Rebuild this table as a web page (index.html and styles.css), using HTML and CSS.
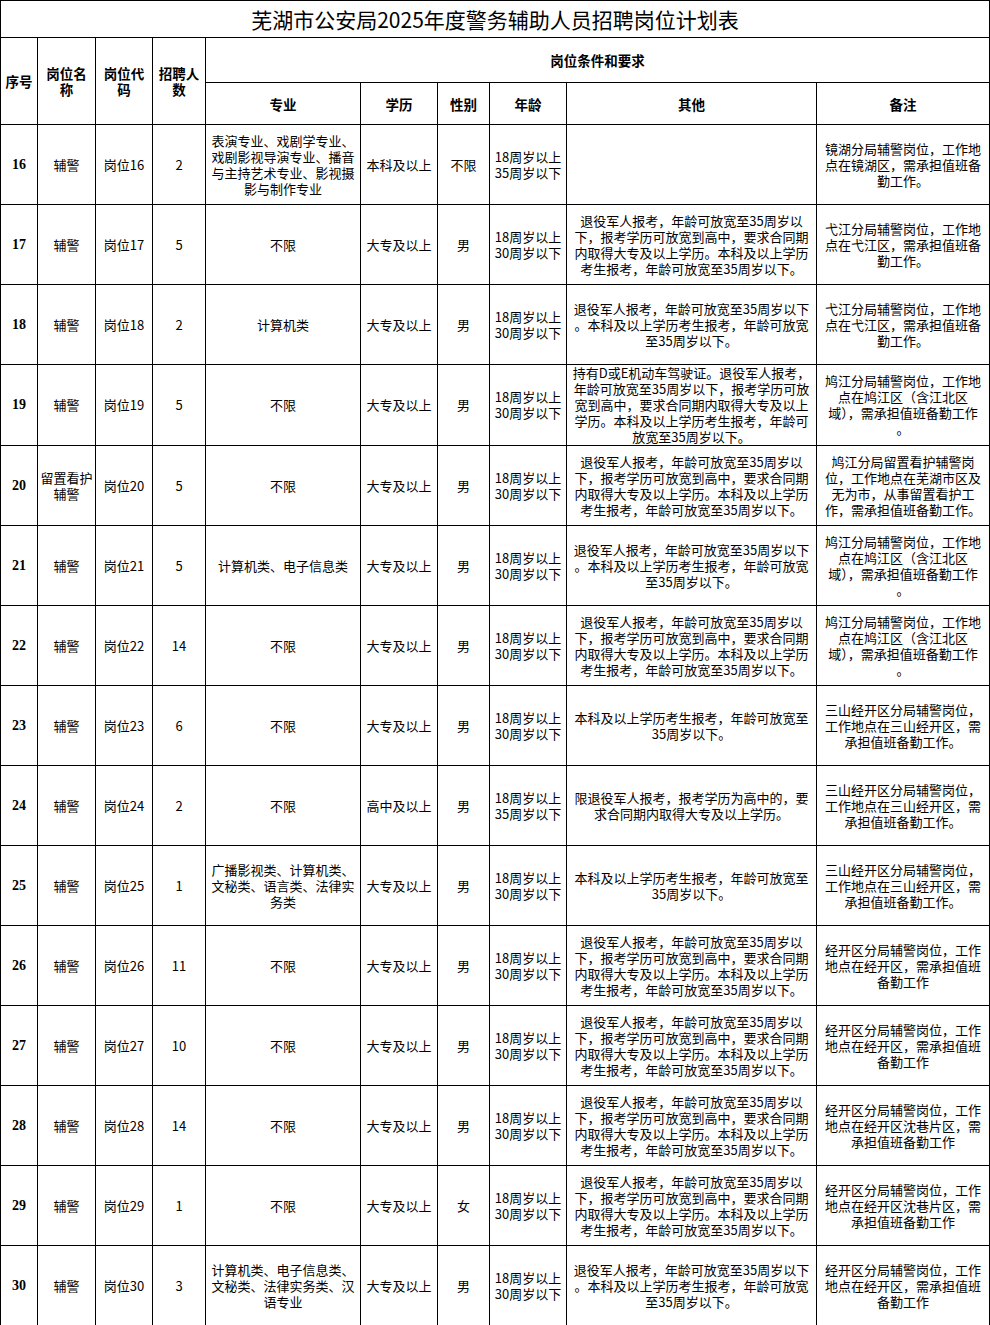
FILE: index.html
```html
<!DOCTYPE html>
<html lang="zh-CN">
<head>
<meta charset="utf-8">
<title>芜湖市公安局2025年度警务辅助人员招聘岗位计划表</title>
<link rel="stylesheet" href="styles.css">
</head>
<body>
<table class="sheet">
<colgroup>
<col class="c1"><col class="c2"><col class="c3"><col class="c4"><col class="c5"><col class="c6"><col class="c7"><col class="c8"><col class="c9"><col class="c10">
</colgroup>
<tr class="r-title"><td colspan="10" class="title">芜湖市公安局2025年度警务辅助人员招聘岗位计划表</td></tr>
<tr class="r-h1">
<td rowspan="2" class="hd">序号</td>
<td rowspan="2" class="hd">岗位名<br>称</td>
<td rowspan="2" class="hd">岗位代<br>码</td>
<td rowspan="2" class="hd">招聘人<br>数</td>
<td colspan="6" class="hd">岗位条件和要求</td>
</tr>
<tr class="r-h2">
<td class="hd">专业</td><td class="hd">学历</td><td class="hd">性别</td><td class="hd">年龄</td><td class="hd">其他</td><td class="hd">备注</td>
</tr>

<tr class="row">
<td class="num">16</td><td>辅警</td><td>岗位16</td><td>2</td>
<td>表演专业、戏剧学专业、<br>戏剧影视导演专业、播音<br>与主持艺术专业、影视摄<br>影与制作专业</td>
<td>本科及以上</td><td>不限</td><td>18周岁以上<br>35周岁以下</td>
<td></td>
<td>镜湖分局辅警岗位，工作地<br>点在镜湖区，需承担值班备<br>勤工作。</td>
</tr>

<tr class="row">
<td class="num">17</td><td>辅警</td><td>岗位17</td><td>5</td>
<td>不限</td><td>大专及以上</td><td>男</td><td>18周岁以上<br>30周岁以下</td>
<td>退役军人报考，年龄可放宽至35周岁以<br>下，报考学历可放宽到高中，要求合同期<br>内取得大专及以上学历。本科及以上学历<br>考生报考，年龄可放宽至35周岁以下。</td>
<td>弋江分局辅警岗位，工作地<br>点在弋江区，需承担值班备<br>勤工作。</td>
</tr>

<tr class="row">
<td class="num">18</td><td>辅警</td><td>岗位18</td><td>2</td>
<td>计算机类</td><td>大专及以上</td><td>男</td><td>18周岁以上<br>30周岁以下</td>
<td>退役军人报考，年龄可放宽至35周岁以下<br>。本科及以上学历考生报考，年龄可放宽<br>至35周岁以下。</td>
<td>弋江分局辅警岗位，工作地<br>点在弋江区，需承担值班备<br>勤工作。</td>
</tr>

<tr class="row">
<td class="num">19</td><td>辅警</td><td>岗位19</td><td>5</td>
<td>不限</td><td>大专及以上</td><td>男</td><td>18周岁以上<br>30周岁以下</td>
<td>持有D或E机动车驾驶证。退役军人报考，<br>年龄可放宽至35周岁以下，报考学历可放<br>宽到高中，要求合同期内取得大专及以上<br>学历。本科及以上学历考生报考，年龄可<br>放宽至35周岁以下。</td>
<td>鸠江分局辅警岗位，工作地<br>点在鸠江区（含江北区<br>域），需承担值班备勤工作<br>。</td>
</tr>

<tr class="row">
<td class="num">20</td><td>留置看护<br>辅警</td><td>岗位20</td><td>5</td>
<td>不限</td><td>大专及以上</td><td>男</td><td>18周岁以上<br>30周岁以下</td>
<td>退役军人报考，年龄可放宽至35周岁以<br>下，报考学历可放宽到高中，要求合同期<br>内取得大专及以上学历。本科及以上学历<br>考生报考，年龄可放宽至35周岁以下。</td>
<td>鸠江分局留置看护辅警岗<br>位，工作地点在芜湖市区及<br>无为市，从事留置看护工<br>作，需承担值班备勤工作。</td>
</tr>

<tr class="row">
<td class="num">21</td><td>辅警</td><td>岗位21</td><td>5</td>
<td>计算机类、电子信息类</td><td>大专及以上</td><td>男</td><td>18周岁以上<br>30周岁以下</td>
<td>退役军人报考，年龄可放宽至35周岁以下<br>。本科及以上学历考生报考，年龄可放宽<br>至35周岁以下。</td>
<td>鸠江分局辅警岗位，工作地<br>点在鸠江区（含江北区<br>域），需承担值班备勤工作<br>。</td>
</tr>

<tr class="row">
<td class="num">22</td><td>辅警</td><td>岗位22</td><td>14</td>
<td>不限</td><td>大专及以上</td><td>男</td><td>18周岁以上<br>30周岁以下</td>
<td>退役军人报考，年龄可放宽至35周岁以<br>下，报考学历可放宽到高中，要求合同期<br>内取得大专及以上学历。本科及以上学历<br>考生报考，年龄可放宽至35周岁以下。</td>
<td>鸠江分局辅警岗位，工作地<br>点在鸠江区（含江北区<br>域），需承担值班备勤工作<br>。</td>
</tr>

<tr class="row">
<td class="num">23</td><td>辅警</td><td>岗位23</td><td>6</td>
<td>不限</td><td>大专及以上</td><td>男</td><td>18周岁以上<br>30周岁以下</td>
<td>本科及以上学历考生报考，年龄可放宽至<br>35周岁以下。</td>
<td>三山经开区分局辅警岗位，<br>工作地点在三山经开区，需<br>承担值班备勤工作。</td>
</tr>

<tr class="row">
<td class="num">24</td><td>辅警</td><td>岗位24</td><td>2</td>
<td>不限</td><td>高中及以上</td><td>男</td><td>18周岁以上<br>35周岁以下</td>
<td>限退役军人报考，报考学历为高中的，要<br>求合同期内取得大专及以上学历。</td>
<td>三山经开区分局辅警岗位，<br>工作地点在三山经开区，需<br>承担值班备勤工作。</td>
</tr>

<tr class="row">
<td class="num">25</td><td>辅警</td><td>岗位25</td><td>1</td>
<td>广播影视类、计算机类、<br>文秘类、语言类、法律实<br>务类</td><td>大专及以上</td><td>男</td><td>18周岁以上<br>30周岁以下</td>
<td>本科及以上学历考生报考，年龄可放宽至<br>35周岁以下。</td>
<td>三山经开区分局辅警岗位，<br>工作地点在三山经开区，需<br>承担值班备勤工作。</td>
</tr>

<tr class="row">
<td class="num">26</td><td>辅警</td><td>岗位26</td><td>11</td>
<td>不限</td><td>大专及以上</td><td>男</td><td>18周岁以上<br>30周岁以下</td>
<td>退役军人报考，年龄可放宽至35周岁以<br>下，报考学历可放宽到高中，要求合同期<br>内取得大专及以上学历。本科及以上学历<br>考生报考，年龄可放宽至35周岁以下。</td>
<td>经开区分局辅警岗位，工作<br>地点在经开区，需承担值班<br>备勤工作</td>
</tr>

<tr class="row">
<td class="num">27</td><td>辅警</td><td>岗位27</td><td>10</td>
<td>不限</td><td>大专及以上</td><td>男</td><td>18周岁以上<br>30周岁以下</td>
<td>退役军人报考，年龄可放宽至35周岁以<br>下，报考学历可放宽到高中，要求合同期<br>内取得大专及以上学历。本科及以上学历<br>考生报考，年龄可放宽至35周岁以下。</td>
<td>经开区分局辅警岗位，工作<br>地点在经开区，需承担值班<br>备勤工作</td>
</tr>

<tr class="row">
<td class="num">28</td><td>辅警</td><td>岗位28</td><td>14</td>
<td>不限</td><td>大专及以上</td><td>男</td><td>18周岁以上<br>30周岁以下</td>
<td>退役军人报考，年龄可放宽至35周岁以<br>下，报考学历可放宽到高中，要求合同期<br>内取得大专及以上学历。本科及以上学历<br>考生报考，年龄可放宽至35周岁以下。</td>
<td>经开区分局辅警岗位，工作<br>地点在经开区沈巷片区，需<br>承担值班备勤工作</td>
</tr>

<tr class="row">
<td class="num">29</td><td>辅警</td><td>岗位29</td><td>1</td>
<td>不限</td><td>大专及以上</td><td>女</td><td>18周岁以上<br>30周岁以下</td>
<td>退役军人报考，年龄可放宽至35周岁以<br>下，报考学历可放宽到高中，要求合同期<br>内取得大专及以上学历。本科及以上学历<br>考生报考，年龄可放宽至35周岁以下。</td>
<td>经开区分局辅警岗位，工作<br>地点在经开区沈巷片区，需<br>承担值班备勤工作</td>
</tr>

<tr class="row">
<td class="num">30</td><td>辅警</td><td>岗位30</td><td>3</td>
<td>计算机类、电子信息类、<br>文秘类、法律实务类、汉<br>语专业</td><td>大专及以上</td><td>男</td><td>18周岁以上<br>30周岁以下</td>
<td>退役军人报考，年龄可放宽至35周岁以下<br>。本科及以上学历考生报考，年龄可放宽<br>至35周岁以下。</td>
<td>经开区分局辅警岗位，工作<br>地点在经开区，需承担值班<br>备勤工作</td>
</tr>
</table>
</body>
</html>
```

FILE: styles.css
```css
html, body {
  margin: 0;
  padding: 0;
  background: #ffffff;
}

.sheet {
  border-collapse: collapse;
  table-layout: fixed;
  width: 990px;
  font-family: "Noto Sans CJK SC", "Liberation Sans", sans-serif;
  font-size: 13px;
  line-height: 16px;
  color: #000;
}

.sheet td {
  border: 1px solid #000;
  padding: 0;
  text-align: center;
  vertical-align: middle;
  white-space: nowrap;
  overflow: hidden;
}

.c1 { width: 37px; }
.c2 { width: 58px; }
.c3 { width: 57px; }
.c4 { width: 53px; }
.c5 { width: 155px; }
.c6 { width: 77px; }
.c7 { width: 52px; }
.c8 { width: 77px; }
.c9 { width: 250px; }
.c10 { width: 173px; }

.r-title { height: 37px; }
.r-h1 { height: 45px; }
.r-h2 { height: 42px; }
.row { height: 80px; }

.sheet td.title {
  font-size: 21px;
  line-height: 26px;
  font-weight: normal;
}

.sheet td.hd {
  font-weight: bold;
  font-size: 13.5px;
}

.sheet td.num {
  font-family: "Liberation Serif", "Times New Roman", serif;
  font-weight: bold;
  font-size: 14px;
}
```
